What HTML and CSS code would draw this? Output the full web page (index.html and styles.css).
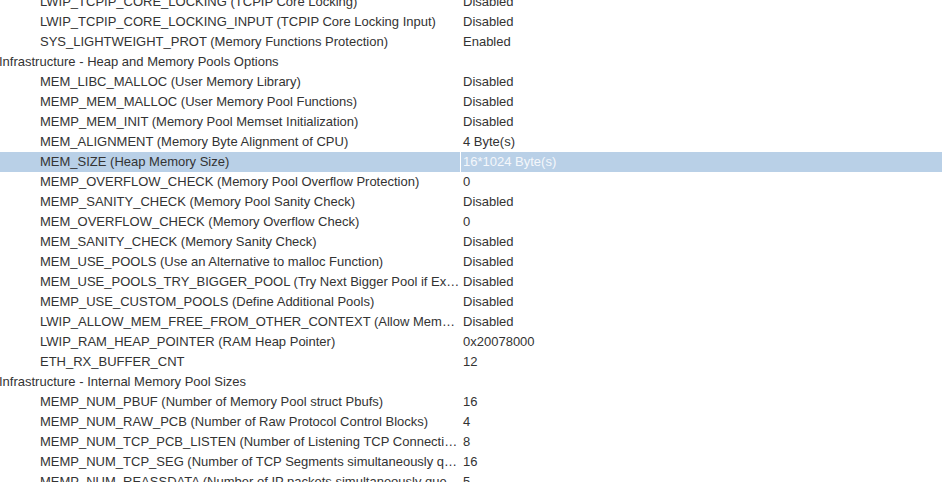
FILE: index.html
```html
<!DOCTYPE html>
<html>
<head>
<meta charset="utf-8">
<link rel="stylesheet" href="styles.css">
</head>
<body>
<div class="grid">
  <div class="row"><div class="name item">LWIP_TCPIP_CORE_LOCKING (TCPIP Core Locking)</div><div class="value">Disabled</div></div>
  <div class="row"><div class="name item">LWIP_TCPIP_CORE_LOCKING_INPUT (TCPIP Core Locking Input)</div><div class="value">Disabled</div></div>
  <div class="row"><div class="name item">SYS_LIGHTWEIGHT_PROT (Memory Functions Protection)</div><div class="value">Enabled</div></div>
  <div class="row"><div class="name cat">Infrastructure - Heap and Memory Pools Options</div></div>
  <div class="row"><div class="name item">MEM_LIBC_MALLOC (User Memory Library)</div><div class="value">Disabled</div></div>
  <div class="row"><div class="name item">MEMP_MEM_MALLOC (User Memory Pool Functions)</div><div class="value">Disabled</div></div>
  <div class="row"><div class="name item">MEMP_MEM_INIT (Memory Pool Memset Initialization)</div><div class="value">Disabled</div></div>
  <div class="row"><div class="name item">MEM_ALIGNMENT (Memory Byte Alignment of CPU)</div><div class="value">4 Byte(s)</div></div>
  <div class="row selected"><div class="name item">MEM_SIZE (Heap Memory Size)</div><div class="value">16*1024 Byte(s)</div></div>
  <div class="row"><div class="name item">MEMP_OVERFLOW_CHECK (Memory Pool Overflow Protection)</div><div class="value">0</div></div>
  <div class="row"><div class="name item">MEMP_SANITY_CHECK (Memory Pool Sanity Check)</div><div class="value">Disabled</div></div>
  <div class="row"><div class="name item">MEM_OVERFLOW_CHECK (Memory Overflow Check)</div><div class="value">0</div></div>
  <div class="row"><div class="name item">MEM_SANITY_CHECK (Memory Sanity Check)</div><div class="value">Disabled</div></div>
  <div class="row"><div class="name item">MEM_USE_POOLS (Use an Alternative to malloc Function)</div><div class="value">Disabled</div></div>
  <div class="row"><div class="name item">MEM_USE_POOLS_TRY_BIGGER_POOL (Try Next Bigger Pool if Exhausted)</div><div class="value">Disabled</div></div>
  <div class="row"><div class="name item">MEMP_USE_CUSTOM_POOLS (Define Additional Pools)</div><div class="value">Disabled</div></div>
  <div class="row"><div class="name item">LWIP_ALLOW_MEM_FREE_FROM_OTHER_CONTEXT (Allow Memory Free From Other Context)</div><div class="value">Disabled</div></div>
  <div class="row"><div class="name item">LWIP_RAM_HEAP_POINTER (RAM Heap Pointer)</div><div class="value">0x20078000</div></div>
  <div class="row"><div class="name item">ETH_RX_BUFFER_CNT</div><div class="value">12</div></div>
  <div class="row"><div class="name cat">Infrastructure - Internal Memory Pool Sizes</div></div>
  <div class="row"><div class="name item">MEMP_NUM_PBUF (Number of Memory Pool struct Pbufs)</div><div class="value">16</div></div>
  <div class="row"><div class="name item">MEMP_NUM_RAW_PCB (Number of Raw Protocol Control Blocks)</div><div class="value">4</div></div>
  <div class="row"><div class="name item">MEMP_NUM_TCP_PCB_LISTEN (Number of Listening TCP Connections)</div><div class="value">8</div></div>
  <div class="row"><div class="name item">MEMP_NUM_TCP_SEG (Number of TCP Segments simultaneously queued)</div><div class="value">16</div></div>
  <div class="row"><div class="name item">MEMP_NUM_REASSDATA (Number of IP packets simultaneously queued)</div><div class="value">5</div></div>
</div>
</body>
</html>
```

FILE: styles.css
```css
html, body {
  margin: 0;
  padding: 0;
  background: #ffffff;
  overflow: hidden;
}
body {
  font-family: "Liberation Sans", Arial, sans-serif;
  font-size: 13px;
  color: #333333;
}
.grid {
  display: flex;
  flex-direction: column;
  margin-top: -8px;
}
.row {
  display: flex;
  height: 20px;
  line-height: 20px;
}
.name {
  width: 460px;
  flex: none;
  white-space: nowrap;
  overflow: hidden;
  text-overflow: ellipsis;
  box-sizing: border-box;
}
.item {
  padding-left: 40px;
  padding-right: 0;
}
.cat {
  padding-left: 0;
  margin-left: -1px;
  width: 461px;
}
.value {
  flex: 1;
  margin-left: 1px;
  padding-left: 2px;
  white-space: nowrap;
}
.selected .name {
  background: #b9d0e7;
}
.selected .value {
  background: #b9d0e7;
  color: #f4f7fb;
}
```
